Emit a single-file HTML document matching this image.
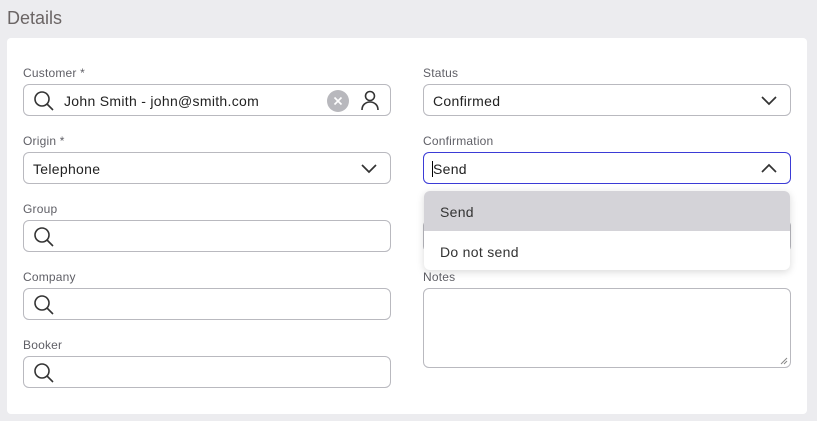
<!DOCTYPE html>
<html><head><style>
body{margin:0;width:817px;height:421px;background:#ececef;font-family:"Liberation Sans",sans-serif;position:relative;overflow:hidden}
.t{position:absolute;left:7px;top:8px;font-size:18px;color:#6b6565}
.card{position:absolute;left:7px;top:38px;width:800px;height:376px;background:#fff;border-radius:4px}
.l{position:absolute;font-size:12px;color:#5f5f66;letter-spacing:0.2px}
.i{position:absolute;height:30px;border:1px solid #b9b9bf;border-radius:6px;background:#fff;box-sizing:content-box;font-size:14px;color:#222;letter-spacing:0.3px}
.i span{position:absolute;top:8px}
svg{position:absolute}
</style></head><body>
<div class="t">Details</div>
<div class="card"></div>
<div class="l" style="left:23px;top:66px">Customer *</div>
<div class="i" style="left:23px;top:84px;width:366px">
<svg style="left:8px;top:4px" width="24" height="24" viewBox="0 0 24 24" fill="none" stroke="#333" stroke-width="1.6"><circle cx="10" cy="10" r="7"/><path d="M15 15l6 6"/></svg>
<span style="left:40px">John Smith - john@smith.com</span>
<svg style="left:303px;top:5px" width="22" height="22"><circle cx="11" cy="11" r="11" fill="#b8b8bd"/><path d="M7.5 7.5l7 7M14.5 7.5l-7 7" stroke="#fff" stroke-width="1.6"/></svg>
<svg style="left:336px;top:5px" width="20" height="20" viewBox="0 0 20 20" fill="none" stroke="#333" stroke-width="1.6"><circle cx="10" cy="6" r="4.5"/><path d="M2 20c0-5 3.5-8 8-8s8 3 8 8"/></svg>
</div>
<div class="l" style="left:23px;top:134px">Origin *</div>
<div class="i" style="left:23px;top:152px;width:366px"><span style="left:9px">Telephone</span>
<svg style="left:337px;top:9px" width="16" height="12"><path d="M1 3l7 7 7-7" fill="none" stroke="#333" stroke-width="1.7"/></svg></div>
<div class="l" style="left:23px;top:202px">Group</div>
<div class="l" style="left:23px;top:270px">Company</div>
<div class="l" style="left:23px;top:338px">Booker</div>
<div class="i" style="left:23px;top:220px;width:366px"><svg style="left:8px;top:4px" width="24" height="24" viewBox="0 0 24 24" fill="none" stroke="#333" stroke-width="1.6"><circle cx="10" cy="10" r="7"/><path d="M15 15l6 6"/></svg></div>
<div class="i" style="left:23px;top:288px;width:366px"><svg style="left:8px;top:4px" width="24" height="24" viewBox="0 0 24 24" fill="none" stroke="#333" stroke-width="1.6"><circle cx="10" cy="10" r="7"/><path d="M15 15l6 6"/></svg></div>
<div class="i" style="left:23px;top:356px;width:366px"><svg style="left:8px;top:4px" width="24" height="24" viewBox="0 0 24 24" fill="none" stroke="#333" stroke-width="1.6"><circle cx="10" cy="10" r="7"/><path d="M15 15l6 6"/></svg></div>
<div class="l" style="left:423px;top:66px">Status</div>
<div class="i" style="left:423px;top:84px;width:366px"><span style="left:9px">Confirmed</span>
<svg style="left:337px;top:9px" width="16" height="12"><path d="M1 3l7 7 7-7" fill="none" stroke="#333" stroke-width="1.7"/></svg></div>
<div class="l" style="left:423px;top:134px">Confirmation</div>
<div class="i" style="left:423px;top:152px;width:366px;border-color:#3b3bd6"><span style="left:8px;border-left:1px solid #000;padding-left:0">Send</span>
<svg style="left:337px;top:9px" width="16" height="12"><path d="M1 10l7-7 7 7" fill="none" stroke="#333" stroke-width="1.7"/></svg></div>
<div class="i" style="left:423px;top:220px;width:366px"></div>
<div class="l" style="left:423px;top:270px">Notes</div>
<div class="i" style="left:423px;top:288px;width:366px;height:78px">
<svg style="left:356px;top:68px" width="8" height="8"><path d="M1 7l6-6M4 7l3-3" stroke="#888"/></svg></div>
<div style="position:absolute;left:424px;top:191px;width:366px;height:79px;background:#fff;border-radius:6px;box-shadow:0 2px 8px rgba(0,0,0,.15);overflow:hidden;font-size:14px;color:#333;letter-spacing:0.3px">
<div style="height:40px;background:#d4d3d8;line-height:42px;padding-left:16px">Send</div>
<div style="height:39px;line-height:42px;padding-left:16px">Do not send</div></div>
</body></html>
